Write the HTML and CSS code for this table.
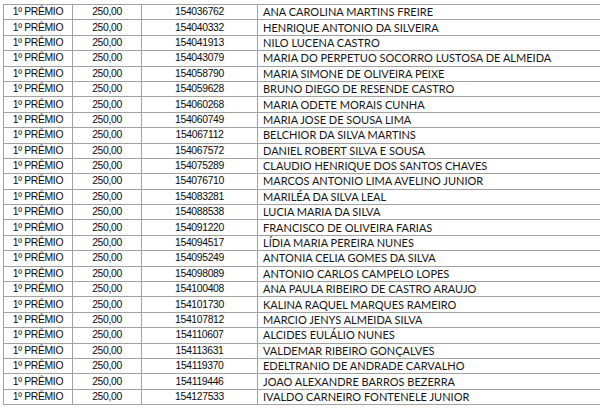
FILE: index.html
```html
<!DOCTYPE html>
<html lang="pt-BR">
<head>
<meta charset="utf-8">
<title>Premiados</title>
<link rel="stylesheet" href="styles.css">
</head>
<body>
<div class="sheet">
<table class="grid">
<colgroup><col class="c1"><col class="c2"><col class="c3"><col class="c4"></colgroup>
<tbody>
<tr><td class="ctr">1º PRÊMIO</td><td class="ctr">250,00</td><td class="ctr">154036762</td><td class="name">ANA CAROLINA MARTINS FREIRE</td></tr>
<tr><td class="ctr">1º PRÊMIO</td><td class="ctr">250,00</td><td class="ctr">154040332</td><td class="name">HENRIQUE ANTONIO DA SILVEIRA</td></tr>
<tr><td class="ctr">1º PRÊMIO</td><td class="ctr">250,00</td><td class="ctr">154041913</td><td class="name">NILO LUCENA CASTRO</td></tr>
<tr><td class="ctr">1º PRÊMIO</td><td class="ctr">250,00</td><td class="ctr">154043079</td><td class="name">MARIA DO PERPETUO SOCORRO LUSTOSA DE ALMEIDA</td></tr>
<tr><td class="ctr">1º PRÊMIO</td><td class="ctr">250,00</td><td class="ctr">154058790</td><td class="name">MARIA SIMONE DE OLIVEIRA PEIXE</td></tr>
<tr><td class="ctr">1º PRÊMIO</td><td class="ctr">250,00</td><td class="ctr">154059628</td><td class="name">BRUNO DIEGO DE RESENDE CASTRO</td></tr>
<tr><td class="ctr">1º PRÊMIO</td><td class="ctr">250,00</td><td class="ctr">154060268</td><td class="name">MARIA ODETE MORAIS CUNHA</td></tr>
<tr><td class="ctr">1º PRÊMIO</td><td class="ctr">250,00</td><td class="ctr">154060749</td><td class="name">MARIA JOSE DE SOUSA LIMA</td></tr>
<tr><td class="ctr">1º PRÊMIO</td><td class="ctr">250,00</td><td class="ctr">154067112</td><td class="name">BELCHIOR DA SILVA MARTINS</td></tr>
<tr><td class="ctr">1º PRÊMIO</td><td class="ctr">250,00</td><td class="ctr">154067572</td><td class="name">DANIEL ROBERT SILVA E SOUSA</td></tr>
<tr><td class="ctr">1º PRÊMIO</td><td class="ctr">250,00</td><td class="ctr">154075289</td><td class="name">CLAUDIO HENRIQUE DOS SANTOS CHAVES</td></tr>
<tr><td class="ctr">1º PRÊMIO</td><td class="ctr">250,00</td><td class="ctr">154076710</td><td class="name">MARCOS ANTONIO LIMA AVELINO JUNIOR</td></tr>
<tr><td class="ctr">1º PRÊMIO</td><td class="ctr">250,00</td><td class="ctr">154083281</td><td class="name">MARILÉA DA SILVA LEAL</td></tr>
<tr><td class="ctr">1º PRÊMIO</td><td class="ctr">250,00</td><td class="ctr">154088538</td><td class="name">LUCIA MARIA DA SILVA</td></tr>
<tr><td class="ctr">1º PRÊMIO</td><td class="ctr">250,00</td><td class="ctr">154091220</td><td class="name">FRANCISCO DE OLIVEIRA FARIAS</td></tr>
<tr><td class="ctr">1º PRÊMIO</td><td class="ctr">250,00</td><td class="ctr">154094517</td><td class="name">LÍDIA MARIA PEREIRA NUNES</td></tr>
<tr><td class="ctr">1º PRÊMIO</td><td class="ctr">250,00</td><td class="ctr">154095249</td><td class="name">ANTONIA CELIA GOMES DA SILVA</td></tr>
<tr><td class="ctr">1º PRÊMIO</td><td class="ctr">250,00</td><td class="ctr">154098089</td><td class="name">ANTONIO CARLOS CAMPELO LOPES</td></tr>
<tr><td class="ctr">1º PRÊMIO</td><td class="ctr">250,00</td><td class="ctr">154100408</td><td class="name">ANA PAULA RIBEIRO DE CASTRO ARAUJO</td></tr>
<tr><td class="ctr">1º PRÊMIO</td><td class="ctr">250,00</td><td class="ctr">154101730</td><td class="name">KALINA RAQUEL MARQUES RAMEIRO</td></tr>
<tr><td class="ctr">1º PRÊMIO</td><td class="ctr">250,00</td><td class="ctr">154107812</td><td class="name">MARCIO JENYS ALMEIDA SILVA</td></tr>
<tr><td class="ctr">1º PRÊMIO</td><td class="ctr">250,00</td><td class="ctr">154110607</td><td class="name">ALCIDES EULÁLIO NUNES</td></tr>
<tr><td class="ctr">1º PRÊMIO</td><td class="ctr">250,00</td><td class="ctr">154113631</td><td class="name">VALDEMAR RIBEIRO GONÇALVES</td></tr>
<tr><td class="ctr">1º PRÊMIO</td><td class="ctr">250,00</td><td class="ctr">154119370</td><td class="name">EDELTRANIO DE ANDRADE CARVALHO</td></tr>
<tr><td class="ctr">1º PRÊMIO</td><td class="ctr">250,00</td><td class="ctr">154119446</td><td class="name">JOAO ALEXANDRE BARROS BEZERRA</td></tr>
<tr><td class="ctr">1º PRÊMIO</td><td class="ctr">250,00</td><td class="ctr">154127533</td><td class="name">IVALDO CARNEIRO FONTENELE JUNIOR</td></tr>
</tbody>
</table>
</div>
</body>
</html>
```
FILE: styles.css
```css
html, body {
  margin: 0;
  padding: 0;
  background: #ffffff;
  overflow: hidden;
}
body {
  width: 600px;
  height: 412px;
}
.sheet {
  padding: 4px 0 0 3px;
  font-family: Lato, "Liberation Sans", sans-serif;
  font-size: 11px;
  color: #151515;
}
.grid {
  border-collapse: collapse;
  table-layout: fixed;
  width: 597px;
}
.c1 { width: 69px; }
.c2 { width: 69px; }
.c3 { width: 116px; }
.c4 { width: 343px; }
.grid td {
  border: 1px solid #a2a2a2;
  height: 14.4px;
  padding: 0;
  line-height: 14px;
  white-space: nowrap;
  overflow: hidden;
}
.grid td.ctr {
  text-align: center;
  font-family: "Liberation Sans", Arial, sans-serif;
  font-size: 10.4px;
  letter-spacing: -0.35px;
  color: #0a0a0a;
}
.grid td.name {
  text-align: left;
  padding-left: 5px;
  border-right: none;
}
```
